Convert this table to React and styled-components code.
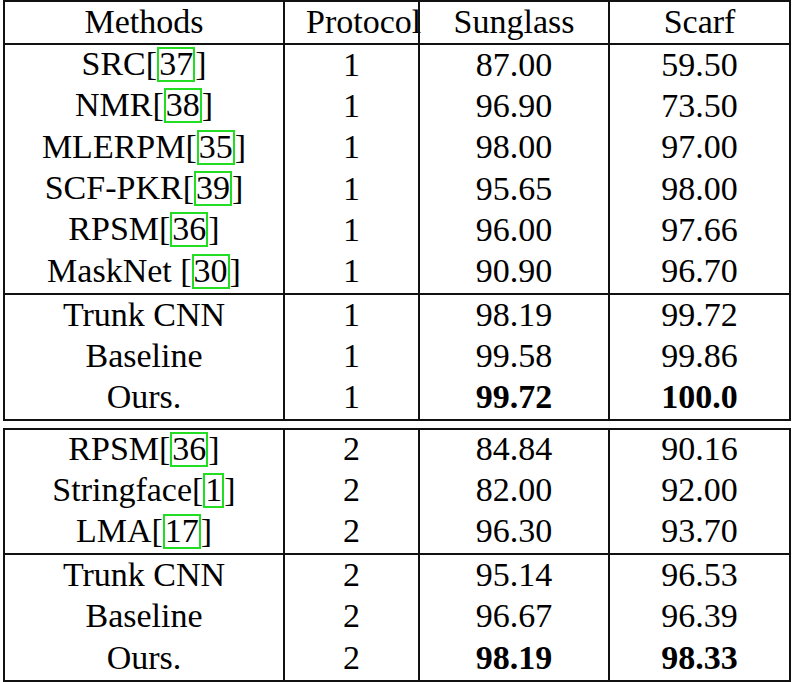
import React from "react";
import styled, { createGlobalStyle } from "styled-components";

const GlobalStyle = createGlobalStyle`
  html, body {
    margin: 0;
    padding: 0;
    background: #fff;
  }
  body {
    font-family: "Liberation Serif", "Times New Roman", serif;
    color: #000;
  }
`;

const Page = styled.div`
  display: flex;
  flex-direction: column;
  gap: 7px;
  padding-left: 3px;
  width: 788px;
`;

const Table = styled.div`
  border: 2px solid #111;
  display: flex;
  flex-direction: column;
`;

const Section = styled.div`
  display: flex;
  flex-direction: column;
  & + & {
    border-top: 2px solid #111;
  }
`;

const Row = styled.div`
  display: grid;
  grid-template-columns: 278px 135px 190px 181px;
  height: ${(p) => p.$h || 41.33}px;
`;

const Cell = styled.div`
  display: flex;
  align-items: center;
  justify-content: ${(p) => (p.$left ? "flex-start" : "center")};
  padding-left: ${(p) => (p.$left ? "21px" : "0")};
  padding-bottom: 2px;
  white-space: nowrap;
  font-size: 34px;
  font-weight: ${(p) => (p.$bold ? 700 : 400)};
  line-height: 1;
  & + & {
    border-left: 2px solid #111;
  }
`;

const Cite = styled.span`
  display: inline-block;
  border: 2px solid #22dd22;
  padding: 3px 0 4px;
  line-height: 24px;
`;

const Method = ({ name, cite }) => (
  <span>
    {name}
    {cite && (
      <>
        [<Cite>{cite}</Cite>]
      </>
    )}
  </span>
);

const first = [
  [
    ["SRC", "37", "1", "87.00", "59.50"],
    ["NMR", "38", "1", "96.90", "73.50"],
    ["MLERPM", "35", "1", "98.00", "97.00"],
    ["SCF-PKR", "39", "1", "95.65", "98.00"],
    ["RPSM", "36", "1", "96.00", "97.66"],
    ["MaskNet ", "30", "1", "90.90", "96.70"],
  ],
  [
    ["Trunk CNN", null, "1", "98.19", "99.72"],
    ["Baseline", null, "1", "99.58", "99.86"],
    ["Ours.", null, "1", "99.72", "100.0", true],
  ],
];

const second = [
  [
    ["RPSM", "36", "2", "84.84", "90.16"],
    ["Stringface", "1", "2", "82.00", "92.00"],
    ["LMA", "17", "2", "96.30", "93.70"],
  ],
  [
    ["Trunk CNN", null, "2", "95.14", "96.53"],
    ["Baseline", null, "2", "96.67", "96.39"],
    ["Ours.", null, "2", "98.19", "98.33", true],
  ],
];

const DataRow = ({ row, h }) => {
  const [name, cite, proto, sun, scarf, bold] = row;
  return (
    <Row $h={h}>
      <Cell>
        <Method name={name} cite={cite} />
      </Cell>
      <Cell>{proto}</Cell>
      <Cell $bold={bold}>{sun}</Cell>
      <Cell $bold={bold}>{scarf}</Cell>
    </Row>
  );
};

export default function App() {
  return (
    <Page>
      <GlobalStyle />
      <Table>
        <Section>
          <Row $h={41}>
            <Cell>Methods</Cell>
            <Cell $left>Protocol</Cell>
            <Cell>Sunglass</Cell>
            <Cell>Scarf</Cell>
          </Row>
        </Section>
        {first.map((sec, i) => (
          <Section key={i}>
            {sec.map((r, j) => (
              <DataRow key={j} row={r} />
            ))}
          </Section>
        ))}
      </Table>
      <Table>
        {second.map((sec, i) => (
          <Section key={i}>
            {sec.map((r, j) => (
              <DataRow key={j} row={r} h={i === 0 ? 41 : 41.67} />
            ))}
          </Section>
        ))}
      </Table>
    </Page>
  );
}
